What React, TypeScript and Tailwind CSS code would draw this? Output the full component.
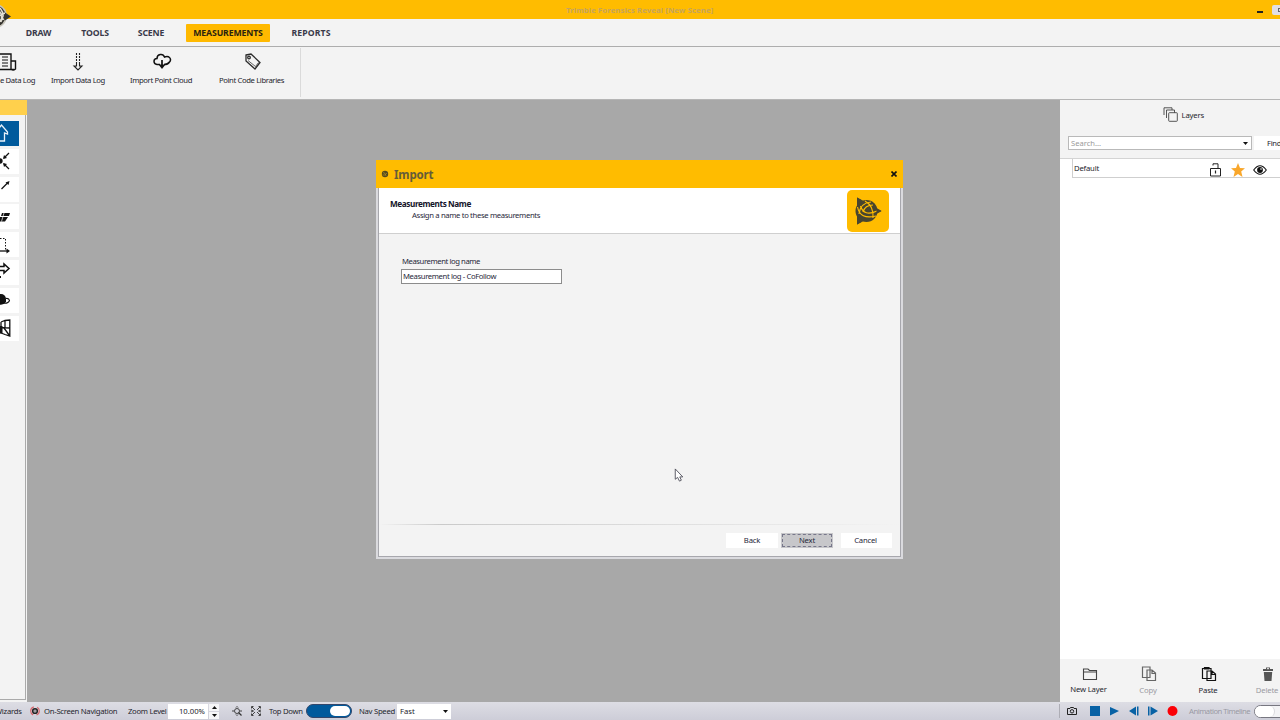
import type { ReactNode } from "react";

function Emblem({ className, fg, bg }: { className: string; fg: string; bg: string }) {
  return (
    <svg viewBox="0 0 28 28" className={className}>
      <path d="M3 0.500 L27.500 14 L3 27.500 Z" fill={fg} />
      <circle cx="12.500" cy="14" r="12" fill={bg} />
      <circle cx="12.500" cy="14" r="11" fill={fg} />
      <g fill="none" stroke={bg} strokeWidth="1.2">
        <path d="M3.500 10 Q6 23 22 19" />
        <path d="M6.500 9 Q10 20 23 14" />
        <path d="M5 17 Q6 6 17 5" />
        <path d="M9 15 Q11 8 19 8" />
        <path d="M11 4 Q20 9 19 21" />
      </g>
      <path d="M3 0.500 L9.500 4 L3 9.500 Z M3 27.500 L9.500 24 L3 18.500 Z M27.500 14 L22.500 11 L22.500 17 Z" fill={fg} />
    </svg>
  );
}

function RibbonItem({ label, width, children }: { label: string; width: string; children: ReactNode }) {
  return (
    <div className={`flex shrink-0 flex-col items-center ${width}`}>
      <div className="flex h-[20px] items-center justify-center">{children}</div>
      <span className="mt-[2px] text-[7.7px] leading-[12px] tracking-[-0.38px]">{label}</span>
    </div>
  );
}

const sideIcons: ReactNode[] = [
  <path key="a" d="M-4 11 L1.500 4 L7.500 11 L7.500 13 L4.500 12 L4.500 20 L-1 20" fill="none" stroke="#e8f2fa" strokeWidth="1.3" />,
  <g key="b" stroke="#111" strokeWidth="1.3" fill="#111">
    <circle cx="0" cy="12" r="2" />
    <path d="M9 4 L4 9 M9 20 L4 15" />
    <path d="M3 10 L4 6 L7 9 Z M3 14 L4 18 L7 15 Z" stroke="none" />
  </g>,
  <g key="c" stroke="#111" strokeWidth="1.2" fill="#111">
    <path d="M1.500 12 L8 5.500" />
    <path d="M9.500 4 L8.500 8 L5.500 5.500 Z" stroke="none" />
  </g>,
  <g key="d" fill="#111">
    <path d="M2 9 L10 9 L9 12 L1 12 Z M0 13 L8 13 L5 17.500 L-1 17.500 Z" />
    <path d="M4 9 L1.500 17.500 M0 12.500 L9 12.500" stroke="#fff" strokeWidth=".7" />
  </g>,
  <g key="e" fill="none" stroke="#111">
    <path d="M0 6.500 L5.500 6.500 L5.500 18" strokeDasharray="1.500 1.500" strokeWidth="1" />
    <path d="M-1 19 L8 19" strokeWidth="1.3" />
    <path d="M6.500 16.500 L10 19 L6.500 21.500 Z" fill="#111" stroke="none" />
  </g>,
  <g key="f" fill="none" stroke="#111" strokeWidth="1.500">
    <path d="M-1 6.500 L4 6.500 L4 4 L9 8.500 L4 13 L4 10.500 L-1 10.500" />
    <path d="M-1 17 L1 17" strokeWidth="2" />
  </g>,
  <g key="g">
    <path d="M-4 11 A5 5 0 0 1 6 11 L6 14 Q2 19 -4 15 Z" fill="#111" />
    <path d="M-2 14 Q8 17 9.500 12.500 Q9 10 6 10.500" fill="none" stroke="#111" strokeWidth="1.1" />
  </g>,
  <g key="h" fill="none" stroke="#111" strokeWidth="1.300">
    <path d="M1 6 L5 4.500 L9.800 4 V20 L5 18.500 L1 17 M1 6 V17 M1 11.500 L9.800 12 M5 4.500 V11.500 M9.800 20 L4 12" />
    <path d="M-1 10 L2.500 10 L2.500 17 L-1 18 Z" fill="#111" stroke="none" />
  </g>,
];

function TitleBar() {
  return (
    <header className="relative flex h-[19px] shrink-0 items-center bg-[#ffbc00]">
      <span className="ml-[566px] w-[150px] shrink-0 text-[7.7px] leading-[18px] font-bold tracking-[0.12px] whitespace-nowrap text-[#c6a45c]">
        Trimble Forensics Reveal [New Scene]
      </span>
      <span className="mt-[4px] ml-[541px] h-[2px] w-[6px] shrink-0 bg-[#222]" />
      <span className="ml-[9px] flex h-[10px] w-[12px] shrink-0 items-center rounded-l-[2px] bg-[#e1dfe4] pl-[6px]">
        <span className="h-[4px] w-[6px] border border-[#666]" />
      </span>
      <svg viewBox="0 0 12 30" className="absolute top-0 left-0 h-[30px] w-[12px]">
        <circle cx="-5" cy="16" r="12" fill="#c7c4ba" />
        <circle cx="-5" cy="16" r="10.500" fill="#34332d" />
        <path d="M-2 10 Q3 13 1 22 M0 8 Q7 17 -2 23 M-3 17 L5 13 M-3 21 L4 19" fill="none" stroke="#e2dfd5" strokeWidth="1.500" />
        <path d="M5 12.500 L11 16.500 L5 20.500 Z" fill="#34332d" />
      </svg>
    </header>
  );
}

function MenuBar() {
  return (
    <nav className="flex h-[28px] shrink-0 items-center border-b border-[#adadad] bg-[#f3f3f3] text-[8.7px] leading-[18px] font-bold tracking-[-0.12px] text-[#3a3a4a]">
      <span className="ml-[17px] w-[43px] text-center">DRAW</span>
      <span className="ml-[13px] w-[44px] text-center">TOOLS</span>
      <span className="ml-[12px] w-[44px] text-center">SCENE</span>
      <span className="ml-[13px] flex h-[18px] w-[84px] items-center justify-center rounded-[1px] bg-[#ffb900] text-[#2a2410]">MEASUREMENTS</span>
      <span className="ml-[16px] w-[50px] text-center tracking-[0.12px]">REPORTS</span>
    </nav>
  );
}

function Ribbon() {
  return (
    <section className="flex h-[53px] shrink-0 border-b border-[#b5b5b5] bg-[#f3f3f3] pt-[5px]">
      <div className="flex w-[35px] shrink-0 flex-col">
        <svg viewBox="0 0 17 20" className="h-[20px] w-[17px]" fill="none" stroke="#111" strokeWidth="1.4">
          <path d="M-1 2 H11 V17 Q13 19 15.500 17 V9 H11 M-1 17.500 H14" />
          <path d="M2 5 H8 M2 8 H8 M2 11 H8 M2 14 H8" strokeWidth="1.1" />
        </svg>
        <span className="mt-[2px] text-[7.7px] leading-[12px] tracking-[-0.37px] whitespace-nowrap">e Data Log</span>
      </div>
      <RibbonItem label="Import Data Log" width="w-[86px]">
        <svg viewBox="0 0 12 20" className="h-[20px] w-[12px]" fill="none" stroke="#222" strokeWidth="1.1">
          <path d="M4.500 1 V13 M7.500 1 V13" strokeDasharray="2 1" />
          <path d="M4.500 12 V14 H2 L6 18 L10 14 H7.500 V12" />
        </svg>
      </RibbonItem>
      <RibbonItem label="Import Point Cloud" width="w-[80px]">
        <svg viewBox="0 0 20 20" className="ml-[2px] h-[20px] w-[20px]" fill="none" stroke="#111" strokeWidth="1.5">
          <path d="M8 12.500 H5 C1 12 1 6.500 5 6.500 C5 2 11 1 12.500 5 C17 3 20 7 17.500 10 Q16 12.500 12 12.500" />
          <path d="M10 8 V14" strokeWidth="1.700" />
          <path d="M6.500 12.500 H13.500 L10 17 Z" fill="#111" stroke="none" />
        </svg>
      </RibbonItem>
      <RibbonItem label="Point Code Libraries" width="w-[101px]">
        <svg viewBox="0 0 18 20" className="ml-[2px] h-[20px] w-[18px]" fill="none" stroke="#2a2a2a" strokeWidth="1.3">
          <path d="M2 3 L7 2 L16 10.500 L11 17 L2 9 Z" />
          <path d="M4 8.500 L11.500 14.500 L14.500 10.500" strokeWidth=".7" />
          <circle cx="5" cy="5.500" r="1.300" />
        </svg>
      </RibbonItem>
      <div className="-mt-[4px] mb-[2px] -ml-[2px] w-px bg-[#dadada]" />
    </section>
  );
}

function SidePanel() {
  return (
    <aside className="flex w-[27px] shrink-0 flex-col bg-[#f3f3f3]">
      <div className="h-[15px] shrink-0 bg-[#ffd04c]" />
      <div className="mr-px mb-[2px] flex flex-1 flex-col gap-[2.8px] border-r border-b border-[#aaa] pt-[6px]">
        {sideIcons.map((icon, i) => (
          <div key={i} className={i === 0 ? "h-[25px] w-[19px] bg-[#005a9c]" : "h-[25px] w-[19px] bg-white"}>
            <svg viewBox="0 0 19 25" className="h-[25px] w-[19px]">{icon}</svg>
          </div>
        ))}
      </div>
    </aside>
  );
}

function ImportDialog() {
  return (
    <div className="mt-[60px] ml-[349px] flex h-[399px] w-[527px] shrink-0 flex-col bg-[#dadade] text-[#28283a]">
      <div className="flex h-[28px] shrink-0 items-center bg-[#ffbc00] pr-[6px] pl-[5px]">
        <svg viewBox="0 0 8 8" className="h-[8px] w-[8px]">
          <circle cx="4" cy="4" r="3.200" fill="#54491f" />
          <path d="M1.500 5 Q4 6 6 3 M2 2.500 Q4.500 2.500 5 6" fill="none" stroke="#b18d22" strokeWidth=".7" />
        </svg>
        <span className="mt-px ml-[5px] text-[11.5px] leading-[16px] font-bold tracking-[-0.15px] text-[#665c38]">Import</span>
        <svg viewBox="0 0 6 6" className="ml-auto h-[6px] w-[6px]" stroke="#111" strokeWidth="1.6">
          <path d="M.5 .5 L5.500 5.500 M5.500 .5 L.5 5.500" />
        </svg>
      </div>
      <div className="mx-[2px] mb-[2px] flex flex-1 flex-col border-x border-b border-[#a7a7ad] bg-[#f3f3f3]">
        <div className="flex h-[46px] shrink-0 justify-between border-b border-[#cfcfcf] bg-white pr-[11px] pl-[11px]">
          <div className="flex flex-col pt-[10px]">
            <span className="text-[8.2px] leading-[12px] font-bold tracking-[-0.4px] text-[#14142a]">Measurements Name</span>
            <span className="ml-[22px] text-[7.7px] leading-[11px] tracking-[-0.35px]">Assign a name to these measurements</span>
          </div>
          <div className="mt-[2px] flex h-[42px] w-[42px] items-center justify-center rounded-[5px] bg-[#ffbc00]">
            <Emblem className="h-[28px] w-[28px]" fg="#48452f" bg="#ffbc00" />
          </div>
        </div>
        <div className="flex flex-1 flex-col pt-[21px] pl-[22px]">
          <span className="ml-[1px] text-[7.7px] leading-[12px] tracking-[-0.42px]">Measurement log name</span>
          <div className="mt-[2px] flex h-[15px] w-[161px] items-start border border-[#8c8c8c] bg-white pl-[1px] text-[7.7px] leading-[12px] tracking-[-0.38px]">
            Measurement log - CoFollow
          </div>
        </div>
        <div className="h-px bg-linear-to-r from-[#f3f3f3] via-[#cacaca] via-12% to-[#f3f3f3] to-100%" />
        <div className="flex h-[31px] justify-end pt-[8px] pr-[8px] text-[7.7px] leading-[11px] tracking-[-0.2px]">
          <div className="flex h-[15px] w-[52px] items-center justify-center bg-white">Back</div>
          <div className="ml-[3px] flex h-[15px] w-[52px] bg-[#c7c7ca] p-[1px]">
            <div className="flex flex-1 items-center justify-center border border-dashed border-[#77778a]">Next</div>
          </div>
          <div className="ml-[8px] flex h-[15px] w-[51px] items-center justify-center bg-white pr-[2px]">Cancel</div>
        </div>
      </div>
    </div>
  );
}

function Workspace() {
  return (
    <main className="relative flex flex-1 items-start bg-[#a8a8a8]">
      <ImportDialog />
      <svg viewBox="0 0 10 16" className="absolute top-[368px] left-[647px] h-[15px] w-[10px]">
        <path d="M1 1 V12 L3.500 10 L5.500 14 L7.500 13 L5.800 9.500 H9 Z" fill="#fff" stroke="#444450" strokeWidth=".9" />
      </svg>
    </main>
  );
}

function LayersPanel() {
  return (
    <aside className="flex w-[220px] shrink-0 flex-col overflow-hidden bg-[#f3f3f3]">
      <div className="flex h-[28px] shrink-0 items-center pl-[103px]">
        <svg viewBox="0 0 15 15" className="h-[15px] w-[15px]" fill="#f3f3f3" stroke="#444" strokeWidth=".9">
          <path d="M1 8 V.8 H9 V3" />
          <path d="M3.500 11 V3 H11.500 V6" />
          <rect x="5.700" y="5.700" width="8.600" height="8.600" rx=".7" />
        </svg>
        <span className="mt-[2px] ml-[3.500px] text-[7.7px] leading-[12px] tracking-[-0.15px]">Layers</span>
      </div>
      <div className="mt-[8px] flex h-[14px] shrink-0 pl-[8px]">
        <div className="flex w-[184px] shrink-0 items-center justify-between border border-[#b9b9b9] bg-white pr-[3px] pl-[2px]">
          <span className="text-[7.6px] leading-[12px] text-[#9a9a9a]">Search...</span>
          <svg viewBox="0 0 5 3" className="h-[3px] w-[5px]"><path d="M0 0 H5 L2.500 3 Z" fill="#111" /></svg>
        </div>
        <div className="ml-[2px] flex w-[26px] shrink-0 items-center bg-white pl-[13px] text-[7.6px] leading-[12px] tracking-[-0.3px]">Find</div>
      </div>
      <div className="mt-[8px] flex flex-1 flex-col border-t border-[#d4d4d4] bg-white">
        <div className="ml-[12px] flex h-[19px] items-center border-b border-l border-[#cfcfcf] pl-[1px]">
          <span className="w-[136px] text-[7.7px] leading-[16px] tracking-[-0.2px]">Default</span>
          <svg viewBox="0 0 11 14" className="mt-[3px] h-[14px] w-[11px]" fill="none" stroke="#222" strokeWidth="1">
            <path d="M.5 5.500 H10.500 V13 H.5 Z M3 2.500 V.8 H8 V5.500" />
            <path d="M5.500 7.500 V10.500" strokeWidth="1.200" />
          </svg>
          <svg viewBox="0 0 14 14" className="mt-[3px] ml-[10px] h-[14px] w-[14px]">
            <path d="M7 0 L9 4.900 L14 5.200 L10.200 8.500 L11.500 14 L7 11 L2.500 14 L3.800 8.500 L0 5.200 L5 4.900 Z" fill="#f9a72b" />
          </svg>
          <svg viewBox="0 0 14 10" className="mt-[3px] ml-[8px] h-[10px] w-[14px]">
            <path d="M.7 5 Q7 -3.500 13.300 5 Q7 13.500 .7 5 Z" fill="#fff" stroke="#111" strokeWidth="1.100" />
            <circle cx="7" cy="5" r="2.900" fill="#111" />
            <circle cx="8" cy="4" r=".8" fill="#fff" />
          </svg>
        </div>
      </div>
      <div className="flex h-[43px] shrink-0 pt-[7px] text-[7.7px] leading-[12px] tracking-[-0.15px]">
        <div className="flex w-[57px] shrink-0 flex-col items-center">
          <svg viewBox="0 0 16 16" className="ml-[2px] h-[16px] w-[16px]" fill="none" stroke="#444" strokeWidth="1.1">
            <path d="M1.500 13.500 V3 H6 L7.500 4.500 H14.500 V13.500 Z M1.500 6 H14.500" />
          </svg>
          <span className="mt-[1px] whitespace-nowrap">New Layer</span>
        </div>
        <div className="ml-px flex w-[60px] shrink-0 flex-col items-center text-[#9a9aa2]">
          <svg viewBox="0 0 16 16" className="ml-[2px] h-[16px] w-[16px]" fill="#f3f3f3" stroke="#666" strokeWidth="1.2">
            <path d="M1.500 1 H9 V11.500 H1.500 Z M6 4 H11 L14.500 7 V14.500 H6 Z M11 4 V7.500 H14.500" />
          </svg>
          <span className="mt-[2px]">Copy</span>
        </div>
        <div className="flex w-[60px] shrink-0 flex-col items-center">
          <svg viewBox="0 0 16 16" className="ml-px h-[16px] w-[16px]" fill="#f3f3f3" stroke="#111" strokeWidth="1.2">
            <path d="M1.500 2.500 H10 V12.500 H1.500 Z M3.500 1.500 H8 V3 H3.500 Z M6 5 H11 L14.500 8 V14.500 H6 Z M11 5 V8.500 H14.500" />
          </svg>
          <span className="mt-[2px]">Paste</span>
        </div>
        <div className="flex w-[58px] shrink-0 flex-col items-center text-[#9a9aa2]">
          <svg viewBox="0 0 12 16" className="ml-[2px] h-[16px] w-[12px]" fill="#555">
            <path d="M1 3 H4 V1.500 H8 V3 H11 V5 H1 Z M1.800 6 H10.200 L9.500 15 H2.500 Z" />
            <path d="M5 2.700 H7" stroke="#f3f3f3" />
          </svg>
          <span className="mt-[2px]">Delete</span>
        </div>
      </div>
    </aside>
  );
}

function StatusBar() {
  return (
    <footer className="flex h-[18px] shrink-0 items-center overflow-hidden bg-linear-to-b from-[#dddde4] to-[#cdcdd8] text-[7.7px] leading-[14px] tracking-[-0.28px] whitespace-nowrap *:shrink-0">
      <span className="-ml-[5px] w-[35px]">Wizards</span>
      <svg viewBox="0 0 10 10" className="h-[10px] w-[10px]" fill="none">
        <circle cx="5" cy="5" r="4.300" stroke="#d8646b" strokeWidth="1.200" strokeDasharray="10 3.500" strokeDashoffset="5" />
        <circle cx="5" cy="5" r="2.300" stroke="#222" strokeWidth="1.600" />
        <circle cx="5" cy="5" r=".8" fill="#555" />
      </svg>
      <span className="ml-[4px] w-[84px]">On-Screen Navigation</span>
      <span className="w-[40px]">Zoom Level</span>
      <div className="flex h-[15px] w-[40px] items-center justify-end bg-white pr-[3px] tracking-normal">10.00%</div>
      <div className="ml-px flex h-[15px] w-[10px] flex-col gap-px">
        <div className="flex flex-1 items-center justify-center bg-[#f5f5f7]"><svg viewBox="0 0 5 3" className="h-[3px] w-[5px]"><path d="M0 3 H5 L2.500 0 Z" fill="#111" /></svg></div>
        <div className="flex flex-1 items-center justify-center bg-[#f5f5f7]"><svg viewBox="0 0 5 3" className="h-[3px] w-[5px]"><path d="M0 0 H5 L2.500 3 Z" fill="#111" /></svg></div>
      </div>
      <svg viewBox="0 0 10 10" className="ml-[13px] h-[10px] w-[10px]" fill="none" stroke="#333" strokeWidth=".9">
        <circle cx="5" cy="5" r="2.500" />
        <path d="M6.500 6.500 L9.500 9.500" strokeWidth="1.200" />
        <path d="M4 1.500 L5 .5 L6 1.500 M4 8.500 L5 9.500 L6 8.500 M1.500 4 L.5 5 L1.500 6 M8.500 4 L9.500 5 L8.500 6" />
      </svg>
      <svg viewBox="0 0 10 10" className="ml-[9px] h-[10px] w-[10px]" fill="none" stroke="#333" strokeWidth=".9">
        <path d="M.5 2.500 V.5 H2.500 M7.500 .5 H9.500 V2.500 M.5 7.500 V9.500 H2.500 M7.500 9.500 H9.500 V7.500 M1 1 L4 4 M9 1 L6 4 M1 9 L4 6 M9 9 L6 6" />
        <path d="M0 4 L2.500 5 L0 6 M10 4 L7.500 5 L10 6" />
      </svg>
      <span className="ml-[8px] w-[37px]">Top Down</span>
      <div className="flex h-[14px] w-[46px] justify-end rounded-full border border-[#33466a] bg-[#005a9c] p-px">
        <div className="w-[20px] rounded-full bg-white" />
      </div>
      <span className="ml-[7px] w-[38px]">Nav Speed</span>
      <div className="flex h-[15px] w-[54px] items-center justify-between bg-white pr-[3px] pl-[3px] tracking-normal">
        <span>Fast</span>
        <svg viewBox="0 0 5 3" className="h-[3px] w-[5px]"><path d="M0 0 H5 L2.500 3 Z" fill="#111" /></svg>
      </div>
      <div className="ml-[608px] h-[14px] w-px bg-[#adadb5]" />
      <svg viewBox="0 0 10 8" className="ml-[7px] h-[8px] w-[10px]" fill="none" stroke="#222" strokeWidth="1">
        <path d="M.5 1.500 H3 L3.500 .5 H6.500 L7 1.500 H9.500 V7.500 H.5 Z" />
        <circle cx="5" cy="4.300" r="1.700" />
      </svg>
      <span className="ml-[13px] h-[10px] w-[10px] bg-[#0862a5]" />
      <svg viewBox="0 0 68 10" className="ml-[10px] h-[10px] w-[68px]" fill="#0862a5">
        <path d="M0 1 L9 5 L0 9.500 Z" />
        <path d="M26 .5 V9.500 L19 5 Z M27 .5 H28.500 V9.500 H27 Z" />
        <path d="M38 .5 H39.500 V9.500 H38 Z M40.500 .5 V9.500 L48 5 Z" />
        <circle cx="62.500" cy="5" r="5" fill="#fb0007" />
      </svg>
      <span className="ml-[11px] w-[65px] tracking-[-0.5px] text-[#9a9aa4]">Animation Timeline</span>
      <div className="flex h-[13px] w-[46px] rounded-full border border-[#777780] bg-[#f3f3f5]">
        <div className="w-[20px] rounded-full border-r border-[#d8d8dc] bg-white" />
      </div>
    </footer>
  );
}

export default function App() {
  return (
    <div className="flex h-[720px] w-[1280px] flex-col overflow-hidden bg-[#f3f3f3] font-['Noto_Sans',sans-serif] text-[#25252d]">
      <TitleBar />
      <MenuBar />
      <Ribbon />
      <div className="flex min-h-0 flex-1">
        <SidePanel />
        <Workspace />
        <LayersPanel />
      </div>
      <StatusBar />
    </div>
  );
}
